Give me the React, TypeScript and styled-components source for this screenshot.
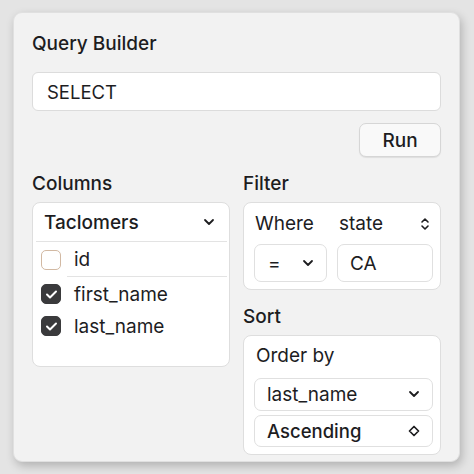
import styled, { createGlobalStyle } from 'styled-components';

const GlobalStyle = createGlobalStyle`
	html, body {
		margin: 0;
		padding: 0;
		background: #e4e4e4;
		font-family: Inter, "Noto Sans", "Liberation Sans", sans-serif;
		color: #1d1d1f;
	}
`;

const Page = styled.div`
	width: 474px;
	height: 474px;
	padding: 12px 14px 12px 13px;
	box-sizing: border-box;
`;

const Panel = styled.div`
	width: 447px;
	height: 450px;
	box-sizing: border-box;
	background: #f2f2f2;
	border-radius: 9px;
	border: 1px solid #e0e0e0;
	box-shadow: 2px 4px 10px rgba(0, 0, 0, 0.22);
	padding: 20px 18px 0 18px;
	display: flex;
	flex-direction: column;
`;

const Title = styled.div`
	font-size: 19px;
	font-weight: 500;
	line-height: 22px;
	margin-bottom: 17px;
`;

const QueryInput = styled.div`
	height: 39px;
	box-sizing: border-box;
	background: #fff;
	border: 1px solid #dcdcdc;
	border-radius: 6px;
	padding: 0 14px;
	display: flex;
	align-items: center;
	font-size: 18.5px;
`;

const Actions = styled.div`
	display: flex;
	justify-content: flex-end;
	margin-top: 12px;
`;

const RunButton = styled.button`
	width: 82px;
	height: 34px;
	box-sizing: border-box;
	background: #f9f9f9;
	border: 1px solid #d6d6d6;
	border-radius: 7px;
	box-shadow: 0 1px 1px rgba(0, 0, 0, 0.08);
	font-family: inherit;
	font-size: 19px;
	font-weight: 500;
	color: #1d1d1f;
`;

const Columns = styled.div`
	display: grid;
	grid-template-columns: 198px 198px;
	column-gap: 13px;
	margin-top: 16px;
`;

const Stack = styled.div`
	display: flex;
	flex-direction: column;
`;

const SectionLabel = styled.div<{ $top?: number }>`
	font-size: 19px;
	font-weight: 500;
	line-height: 22px;
	margin-top: ${({ $top }) => $top ?? 0}px;
	margin-bottom: 7px;
`;

const Card = styled.div<{ $height: number }>`
	height: ${({ $height }) => $height}px;
	box-sizing: border-box;
	background: #fff;
	border: 1px solid #dedede;
	border-radius: 8px;
	display: flex;
	flex-direction: column;
`;

const CardHeader = styled.div`
	height: 38px;
	display: flex;
	align-items: center;
	justify-content: space-between;
	padding: 0 12px 0 8px;
	margin: 0 2px 0 3px;
	border-bottom: 1px solid #e3e3e3;
	font-size: 19px;
	font-weight: 500;
`;

const CheckRow = styled.div<{ $divider?: boolean; $height: number }>`
	height: ${({ $height }) => $height}px;
	display: flex;
	align-items: center;
	gap: 13px;
	padding-left: 8px;
	font-size: 19px;
	position: relative;
	${({ $divider }) =>
		$divider &&
		`&::after {
			content: '';
			position: absolute;
			left: 34px;
			right: 2px;
			bottom: 0;
			border-bottom: 1px solid #e3e3e3;
		}`}
`;

const Box = styled.span<{ $checked: boolean }>`
	width: 20px;
	height: 20px;
	box-sizing: border-box;
	border-radius: 5px;
	display: flex;
	align-items: center;
	justify-content: center;
	background: ${({ $checked }) => ($checked ? '#3a3a3c' : '#fff')};
	border: 1px solid ${({ $checked }) => ($checked ? '#3a3a3c' : '#d2b9a3')};
`;

const FilterCard = styled(Card)`
	padding: 9px 7px 7px 10px;
`;

const InlineRow = styled.div`
	height: 24px;
	display: flex;
	align-items: center;
	font-size: 19px;
	padding: 0 3px 0 1px;
	margin-bottom: 9px;
`;

const Field = styled.span<{ $width?: number }>`
	width: ${({ $width }) => ($width ? `${$width}px` : 'auto')};
	flex: ${({ $width }) => ($width ? 'none' : '1')};
`;

const Controls = styled.div`
	display: flex;
	gap: 10px;
`;

const Select = styled.div<{ $height: number; $bold?: boolean }>`
	height: ${({ $height }) => $height}px;
	box-sizing: border-box;
	flex: 1;
	border: 1px solid #e0e0e0;
	border-radius: 7px;
	background: #fff;
	display: flex;
	align-items: center;
	justify-content: space-between;
	padding: 0 12px 0 12px;
	font-size: ${({ $bold }) => ($bold ? 18.5 : 19)}px;
	font-weight: ${({ $bold }) => ($bold ? 500 : 400)};
`;

const OperatorSelect = styled(Select)`
	flex: none;
	width: 73px;
	padding: 0 12px 0 13px;
`;

const SortCard = styled(Card)`
	padding: 8px 7px 7px 10px;
	gap: 4px;
`;

const OrderLabel = styled.div`
	font-size: 19px;
	line-height: 24px;
	padding-left: 2px;
	margin-bottom: 6px;
`;

function Chevron() {
	return (
		<svg width="12" height="8" viewBox="0 0 12 8">
			<path d="M2 2 L6 6 L10 2" fill="none" stroke="#1d1d1f" strokeWidth="1.8" strokeLinecap="round" strokeLinejoin="round" />
		</svg>
	);
}

function UpDown() {
	return (
		<svg width="10" height="16" viewBox="0 0 10 16">
			<path d="M2 6 L5 3 L8 6 M2 10 L5 13 L8 10" fill="none" stroke="#1d1d1f" strokeWidth="1.6" strokeLinecap="round" strokeLinejoin="round" />
		</svg>
	);
}

function Diamond() {
	return (
		<svg width="12" height="12" viewBox="0 0 12 12">
			<path d="M6 1.5 L10.5 6 L6 10.5 L1.5 6 Z" fill="none" stroke="#1d1d1f" strokeWidth="1.7" strokeLinejoin="round" />
		</svg>
	);
}

function Check() {
	return (
		<svg width="13" height="11" viewBox="0 0 13 11">
			<path d="M2 5.5 L5 8.5 L11 2.5" fill="none" stroke="#fff" strokeWidth="2" strokeLinecap="round" strokeLinejoin="round" />
		</svg>
	);
}

const columnRows = [
	{ name: 'id', checked: false, height: 35, divider: true },
	{ name: 'first_name', checked: true, height: 34 },
	{ name: 'last_name', checked: true, height: 30 },
];

export default function App() {
	return (
		<>
			<GlobalStyle />
			<Page>
				<Panel>
					<Title>Query Builder</Title>
					<QueryInput>SELECT</QueryInput>
					<Actions>
						<RunButton>Run</RunButton>
					</Actions>
					<Columns>
						<Stack>
							<SectionLabel>Columns</SectionLabel>
							<Card $height={165}>
								<CardHeader>
									Taclomers
									<Chevron />
								</CardHeader>
								{columnRows.map((row) => (
									<CheckRow key={row.name} $height={row.height} $divider={row.divider}>
										<Box $checked={row.checked}>{row.checked && <Check />}</Box>
										{row.name}
									</CheckRow>
								))}
							</Card>
						</Stack>
						<Stack>
							<SectionLabel>Filter</SectionLabel>
							<FilterCard $height={88}>
								<InlineRow>
									<Field $width={84}>Where</Field>
									<Field>state</Field>
									<UpDown />
								</InlineRow>
								<Controls>
									<OperatorSelect $height={38}>
										=
										<Chevron />
									</OperatorSelect>
									<Select $height={38}>CA</Select>
								</Controls>
							</FilterCard>
							<SectionLabel $top={16}>Sort</SectionLabel>
							<SortCard $height={120}>
								<OrderLabel>Order by</OrderLabel>
								<Select $height={36}>
									last_name
									<Chevron />
								</Select>
								<Select $height={30} $bold>
									Ascending
									<Diamond />
								</Select>
							</SortCard>
						</Stack>
					</Columns>
				</Panel>
			</Page>
		</>
	);
}
